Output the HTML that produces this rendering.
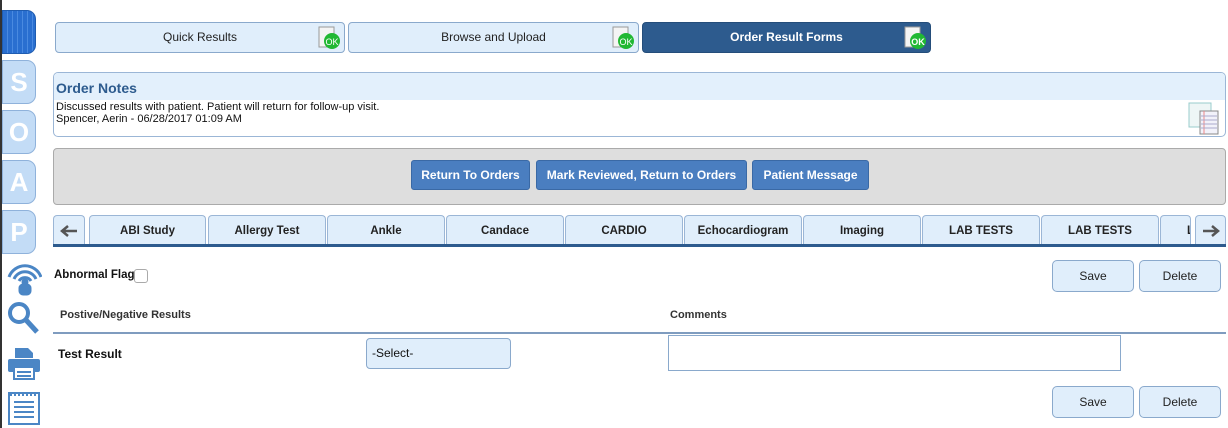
<!DOCTYPE html>
<html><head><meta charset="utf-8"><style>
*{box-sizing:border-box;margin:0;padding:0}
body{width:1228px;height:428px;background:#fff;font-family:"Liberation Sans",Arial,sans-serif;position:relative;overflow:hidden;font-size:12px;color:#111}
.a{position:absolute}
.side{left:2px;width:34px;height:44px;border-radius:0 9px 9px 0;background:#c3dcf6;border:1px solid #8fb2db;color:#fff;font-weight:bold;font-size:26px;text-align:center;line-height:42px}
.tab{top:22px;height:31px;border:1px solid #8aa9cc;border-radius:4px;background:#e0eefb;text-align:center;line-height:29px;font-size:12px;color:#222}
.ok{position:absolute;right:3px;top:3px;width:24px;height:24px}
.btn{top:160px;height:30px;background:#4a7ec0;border:1px solid #3a69a5;border-radius:3px;color:#fff;font-weight:bold;font-size:12px;text-align:center;line-height:28px}
.t{top:215px;height:30px;border:1px solid #9bb6d6;border-bottom:none;border-radius:4px 4px 0 0;background:#e0eefb;font-weight:bold;font-size:11.5px;text-align:center;line-height:31px;color:#222}
.sb{height:32px;width:82px;border:1px solid #8aa9cc;border-radius:5px;background:#e0eefb;text-align:center;line-height:30px;font-size:12px;color:#222}
</style></head><body>
<div class="a" style="left:0;top:0;width:2px;height:428px;background:#333"></div>
<div class="a side" style="top:10px;background:repeating-linear-gradient(90deg,#2a6fd0 0 4px,#4a8ae0 4px 5px);border-color:#1f5cb0"></div>
<div class="a side" style="top:60px">S</div>
<div class="a side" style="top:110px">O</div>
<div class="a side" style="top:160px">A</div>
<div class="a side" style="top:210px">P</div>
<svg class="a" style="left:6px;top:262px" width="36" height="34" viewBox="0 0 36 34" fill="none" stroke="#4b86c5" stroke-width="3"><path d="M3 15 A17 17 0 0 1 35 15"/><path d="M8 17 A12 12 0 0 1 30 17"/><path d="M13 19 A7 7 0 0 1 25 19"/><circle cx="19" cy="20" r="2" fill="#4b86c5"/><rect x="14" y="23" width="10" height="9" rx="3" fill="#4b86c5"/></svg>
<svg class="a" style="left:6px;top:300px" width="34" height="36" viewBox="0 0 34 36" fill="none" stroke="#4b86c5" stroke-width="4"><circle cx="13" cy="13" r="9"/><path d="M20 20 L31 32" stroke-width="5"/></svg>
<svg class="a" style="left:7px;top:346px" width="34" height="34" viewBox="0 0 34 34" fill="#4b86c5"><path d="M8 2h13l5 5v5H8z"/><rect x="1" y="13" width="32" height="13" rx="2"/><rect x="7" y="21" width="20" height="12" fill="#fff" stroke="#4b86c5" stroke-width="2"/><rect x="10" y="25" width="14" height="2"/><rect x="10" y="29" width="14" height="2"/></svg>
<svg class="a" style="left:7px;top:390px" width="34" height="36" viewBox="0 0 34 36" fill="none" stroke="#4b86c5" stroke-width="2"><rect x="2" y="3" width="30" height="31"/><path d="M4 2v4M8 2v4M12 2v4M16 2v4M20 2v4M24 2v4M28 2v4M7 12h20M7 17h20M7 22h20M7 27h20"/></svg>

<div class="a tab" style="left:55px;width:290px">Quick Results<svg class="ok" viewBox="0 0 24 24"><rect x="2" y="1" width="15" height="20" fill="#f4f4f4" stroke="#999"/><circle cx="15" cy="15" r="8" fill="#21b833"/><text x="15" y="19" font-size="9" fill="#fff" text-anchor="middle" font-family="Liberation Sans">OK</text></svg></div>
<div class="a tab" style="left:348px;width:291px">Browse and Upload<svg class="ok" viewBox="0 0 24 24"><rect x="2" y="1" width="15" height="20" fill="#f4f4f4" stroke="#999"/><circle cx="15" cy="15" r="8" fill="#21b833"/><text x="15" y="19" font-size="9" fill="#fff" text-anchor="middle" font-family="Liberation Sans">OK</text></svg></div>
<div class="a tab" style="left:642px;width:289px;background:#2d5b8e;border-color:#244d7a;color:#fff;font-weight:bold">Order Result Forms<svg class="ok" viewBox="0 0 24 24"><rect x="2" y="1" width="15" height="20" fill="#f4f4f4" stroke="#999"/><circle cx="15" cy="15" r="8" fill="#21b833"/><text x="15" y="19" font-size="9" fill="#fff" text-anchor="middle" font-family="Liberation Sans">OK</text></svg></div>

<div class="a" style="left:53px;top:72px;width:1173px;height:65px;border:1px solid #9bb6d6;border-radius:5px;overflow:hidden">
<div style="height:27px;background:#e3f0fc;color:#2d5b8e;font-weight:bold;font-size:14px;padding:7px 0 0 2px">Order Notes</div>
<div style="padding:1px 0 0 2px;font-size:11px;line-height:12px">Discussed results with patient. Patient will return for follow-up visit.<br>Spencer, Aerin - 06/28/2017 01:09 AM</div>
<svg style="position:absolute;right:4px;top:28px" width="34" height="34" viewBox="0 0 34 34"><rect x="2" y="2" width="22" height="24" fill="#eef6f6" stroke="#9cc"/><rect x="13" y="10" width="18" height="23" fill="#f2f2fa" stroke="#888"/><path d="M17 10v23" stroke="#e88"/><path d="M14 15h16M14 19h16M14 23h16M14 27h16" stroke="#aac"/></svg>
</div>

<div class="a" style="left:53px;top:148px;width:1173px;height:57px;background:#dedede;border:1px solid #aaa;border-radius:4px"></div>
<div class="a btn" style="left:411px;width:119px">Return To Orders</div>
<div class="a btn" style="left:536px;width:211px">Mark Reviewed, Return to Orders</div>
<div class="a btn" style="left:752px;width:117px">Patient Message</div>

<div class="a t" style="left:53px;width:32px"><svg width="20" height="14" viewBox="0 0 20 14" style="margin-top:8px"><path d="M18 7H4M9 2L3 7l6 5" fill="none" stroke="#555" stroke-width="2.5"/></svg></div>
<div class="a t" style="left:89px;width:117px">ABI Study</div>
<div class="a t" style="left:208px;width:118px">Allergy Test</div>
<div class="a t" style="left:327px;width:118px">Ankle</div>
<div class="a t" style="left:446px;width:118px">Candace</div>
<div class="a t" style="left:565px;width:118px">CARDIO</div>
<div class="a t" style="left:684px;width:118px">Echocardiogram</div>
<div class="a t" style="left:803px;width:118px">Imaging</div>
<div class="a t" style="left:922px;width:118px">LAB TESTS</div>
<div class="a t" style="left:1041px;width:118px">LAB TESTS</div>
<div class="a t" style="left:1160px;width:31px;text-align:left;padding-left:26px;overflow:hidden">L</div>
<div class="a t" style="left:1195px;width:31px"><svg width="20" height="14" viewBox="0 0 20 14" style="margin-top:8px"><path d="M2 7h14M11 2l6 5-6 5" fill="none" stroke="#555" stroke-width="2.5"/></svg></div>
<div class="a" style="left:53px;top:244px;width:1173px;height:3px;background:#2d5b8e"></div>

<div class="a" style="left:54px;top:269px;font-weight:bold;font-size:11.5px">Abnormal Flag</div>
<div class="a" style="left:134px;top:269px;width:14px;height:14px;border:1px solid #aaa;border-radius:3px;background:#fff"></div>
<div class="a sb" style="left:1052px;top:260px">Save</div>
<div class="a sb" style="left:1139px;top:260px">Delete</div>

<div class="a" style="left:60px;top:309px;font-weight:bold;font-size:11px;color:#333">Postive/Negative Results</div>
<div class="a" style="left:670px;top:309px;font-weight:bold;font-size:11px;color:#333">Comments</div>
<div class="a" style="left:53px;top:332px;width:1173px;height:2px;background:#7f9cbf"></div>
<div class="a" style="left:58px;top:347px;font-weight:bold;font-size:12px">Test Result</div>
<div class="a" style="left:366px;top:338px;width:145px;height:31px;border:1px solid #8aa9cc;border-radius:4px;background:#e0eefb;font-size:12px;line-height:29px;padding-left:5px">-Select-</div>
<div class="a" style="left:668px;top:335px;width:453px;height:36px;border:1px solid #8aa9cc"></div>
<div class="a sb" style="left:1052px;top:386px">Save</div>
<div class="a sb" style="left:1139px;top:386px">Delete</div>
</body></html>
